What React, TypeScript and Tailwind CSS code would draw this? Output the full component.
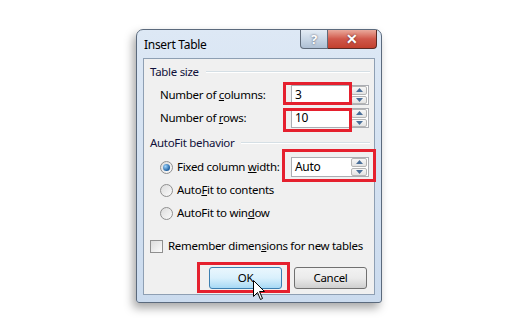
import React from "react";

const font = { fontFamily: '"Noto Sans", "Open Sans", sans-serif' };

function Spinner() {
  return (
    <div className="flex flex-col w-[16px] h-[18px] gap-[1px] ml-auto mr-[1px]">
      {[0, 1].map((i) => (
        <div
          key={i}
          className="flex-1 flex items-center justify-center border border-[#b5b5b5] rounded-[2px] bg-gradient-to-b from-[#f7f7f7] to-[#e3e3e3]"
        >
          <svg width="7" height="4" viewBox="0 0 7 4">
            {i === 0 ? (
              <path d="M0 4 L3.5 0 L7 4 Z" fill="#4a6f99" />
            ) : (
              <path d="M0 0 L3.5 4 L7 0 Z" fill="#4a6f99" />
            )}
          </svg>
        </div>
      ))}
    </div>
  );
}

function NumInput({ value, redClass }: { value: string; redClass: string }) {
  return (
    <div className="relative w-[78px] h-[20px] border border-[#abadb3] bg-white flex items-center">
      <span className="pl-[3px] text-[12px] text-black">{value}</span>
      <Spinner />
      <div className={"absolute border-[3px] border-[#e5202e] " + redClass} />
    </div>
  );
}

function GroupHeader({ label, h }: { label: string; h: string }) {
  return (
    <div className={"flex items-center pl-[6px] pr-[4px] " + h}>
      <span className="text-[11.5px] text-[#10103a]">{label}</span>
      <div className="flex-1 ml-[7px] flex flex-col">
        <div className="h-px bg-[#d5dfe5]" />
        <div className="h-px bg-white" />
      </div>
    </div>
  );
}

function Radio({ checked }: { checked?: boolean }) {
  return (
    <div className="w-[13px] h-[13px] shrink-0 rounded-full border border-[#8f8f8f] bg-gradient-to-br from-[#dcdcdc] to-[#fbfbfb] flex items-center justify-center">
      {checked && (
        <div className="w-[7px] h-[7px] rounded-full bg-[radial-gradient(circle_at_35%_35%,#9fd6ff,#1c5d9e_70%)]" />
      )}
    </div>
  );
}

function Cursor() {
  return (
    <svg
      className="absolute left-[44px] top-[13px]"
      width="13"
      height="21"
      viewBox="0 0 13 21"
    >
      <path
        d="M0.5 0.5 L0.5 16.5 L4.5 12.5 L7.5 19.5 L9.5 18.5 L6.5 11.5 L11.5 11.5 Z"
        fill="white"
        stroke="black"
        strokeWidth="1"
        strokeLinejoin="miter"
      />
    </svg>
  );
}

export default function App() {
  return (
    <div className="w-[531px] h-[329px] bg-white pl-[136px] pt-[29px] text-[11.5px] tracking-[-0.3px]" style={font}>
      <div className="relative w-[246px] h-[274px] rounded-t-[7px] rounded-b-[3px] border border-[#5b6a7d] bg-gradient-to-b from-[#dde8f5] to-[#cbdbee] shadow-[-3px_5px_10px_rgba(0,0,0,0.35)] flex flex-col">
        {/* title bar */}
        <div className="h-[28px] flex items-start">
          <span className="pl-[7px] pt-[6px] text-[12px] text-black">Insert Table</span>
          <div className="ml-auto mr-[4px] flex">
            <div className="w-[28px] h-[19px] border border-[#5f6b7a] border-t-0 rounded-bl-[4px] bg-gradient-to-b from-[#e4ecf5] via-[#c9d7e6] to-[#aebfd3] flex items-center justify-center">
              <span className="text-[13px] font-bold text-white leading-none [text-shadow:0_0_2px_#445]">?</span>
            </div>
            <div className="w-[49px] h-[19px] border border-[#5a2a24] border-t-0 border-l-0 rounded-br-[4px] bg-gradient-to-b from-[#e9a99c] via-[#d0574a] to-[#c2402e] flex items-center justify-center">
              <span className="text-[14px] font-bold text-white leading-none [text-shadow:0_0_2px_#522]">✕</span>
            </div>
          </div>
        </div>
        {/* client */}
        <div className="mx-[6px] mb-[7px] flex-1 border border-[#8e9fb3] bg-[#f0f0f0] flex flex-col">
          <GroupHeader label="Table size" h="h-[26px]" />
          <div className="flex items-center h-[20px] pl-[16px]">
            <span className="text-black w-[131px]">
              Number of <u>c</u>olumns:
            </span>
            <NumInput value="3" redClass="-left-[9px] -top-[4px] w-[69px] h-[23px]" />
          </div>
          <div className="flex items-center h-[20px] mt-[3px] pl-[16px]">
            <span className="text-black w-[131px]">
              Number of <u>r</u>ows:
            </span>
            <NumInput value="10" redClass="-left-[9px] -top-[1px] w-[69px] h-[24px]" />
          </div>
          <GroupHeader label="AutoFit behavior" h="h-[29px]" />
          <div className="flex items-center h-[20px] pl-[16px]">
            <Radio checked />
            <span className="text-black ml-[4px] w-[114px] whitespace-nowrap">
              Fixed column <u>w</u>idth:
            </span>
            <NumInput value="Auto" redClass="-left-[10px] -top-[9px] w-[94px] h-[33px]" />
          </div>
          <div className="flex items-center h-[20px] mt-[3px] pl-[16px]">
            <Radio />
            <span className="text-black ml-[4px]">
              Auto<u>F</u>it to contents
            </span>
          </div>
          <div className="flex items-center h-[20px] mt-[3px] pl-[16px]">
            <Radio />
            <span className="text-black ml-[4px]">
              AutoFit to win<u>d</u>ow
            </span>
          </div>
          <div className="flex items-center h-[20px] mt-[13px] pl-[6px]">
            <div className="w-[13px] h-[13px] shrink-0 border border-[#8f8f8f] bg-gradient-to-br from-[#dcdcdc] to-[#fbfbfb]" />
            <span className="text-black ml-[5px] whitespace-nowrap">
              Remember dimen<u>s</u>ions for new tables
            </span>
          </div>
          <div className="flex justify-end gap-[12px] mt-[11px] pr-[7px]">
            <div className="relative">
              <div className="w-[73px] h-[22px] rounded-[3px] border border-[#3c7fb1] bg-gradient-to-b from-[#eaf6fd] via-[#d9f0fc] to-[#a7d9f5] flex items-center justify-center text-black">
                OK
              </div>
              <div className="absolute -left-[12px] -top-[5px] w-[93px] h-[31px] border-[3px] border-[#e5202e]" />
              <Cursor />
            </div>
            <div className="w-[73px] h-[22px] rounded-[3px] border border-[#707070] bg-gradient-to-b from-[#f2f2f2] via-[#ebebeb] to-[#cfcfcf] flex items-center justify-center text-black">
              Cancel
            </div>
          </div>
        </div>
      </div>
    </div>
  );
}
